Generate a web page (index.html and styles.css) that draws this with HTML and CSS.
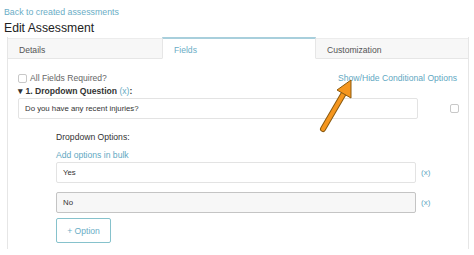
FILE: index.html
```html
<!DOCTYPE html>
<html>
<head>
    <meta charset="utf-8">
    <title>Edit Assessment</title>
    <link rel="stylesheet" href="styles.css">
</head>
<body>

    <a class="back" href="#">Back to created assessments</a>
    <h1 class="title">Edit Assessment</h1>

    <div class="panel">
        <div class="tabs">
            <div class="tab">Details</div>
            <div class="tab active">Fields</div>
            <div class="tab">Customization</div>
        </div>

        <div class="content">
            <div class="row-top">
                <label class="required"><span class="check"></span>All Fields Required?</label>
                <a class="link" href="#">Show/Hide Conditional Options</a>
            </div>

            <div class="question">&#9662; 1. Dropdown Question <span class="link">(x)</span>:</div>
            <div class="question-row">
                <div class="input wide">Do you have any recent injuries?</div>
                <span class="check right"></span>
            </div>

            <div class="options">
                <div class="label">Dropdown Options:</div>
                <a class="link" href="#">Add options in bulk</a>
                <div class="option-row">
                    <div class="input">Yes</div>
                    <span class="link remove">(x)</span>
                </div>
                <div class="option-row second">
                    <div class="input focus">No</div>
                    <span class="link remove">(x)</span>
                </div>
                <button type="button" class="add">+ Option</button>
            </div>
        </div>
    </div>

    <!-- annotation arrow -->
    <svg class="arrow" width="474" height="255" viewBox="0 0 474 255">
        <line x1="323" y1="129" x2="344" y2="93" stroke="#8a5a10" stroke-width="6" stroke-linecap="round"/>
        <line x1="323" y1="129" x2="344" y2="93" stroke="#f5961e" stroke-width="4" stroke-linecap="round"/>
        <polygon points="351,80 337,90 351,98" fill="#f5961e" stroke="#8a5a10" stroke-width="1" stroke-linejoin="round"/>
    </svg>

</body>
</html>
```

FILE: styles.css
```css
body {
    margin: 0;
    width: 474px;
    height: 255px;
    overflow: hidden;
    background: #fff;
    font-family: "Liberation Sans", Arial, sans-serif;
    color: #333;
    position: relative;
}

a {
    text-decoration: none;
}

.link {
    color: #5fa8c2;
}

.back {
    display: block;
    margin: 5px 0 0 4px;
    font-size: 8.8px;
    line-height: 14px;
    color: #6aadc6;
}

.title {
    margin: 0 0 0 4px;
    font-size: 12.2px;
    font-weight: normal;
    line-height: 18px;
    color: #222;
}

/* panel with tabs */
.panel {
    margin-left: 7px;
    width: 460px;
    height: 212px;
    border-left: 1px solid #e6e6e6;
    border-right: 1px solid #e6e6e6;
}

.tabs {
    display: flex;
    height: 22px;
}

.tab {
    width: 154px;
    height: 21px;
    margin-top: 1px;
    box-sizing: border-box;
    padding-left: 11px;
    font-size: 8.6px;
    line-height: 22px;
    color: #555;
    background: #f7f7f7;
    border-top: 1px solid #ececec;
    border-bottom: 1px solid #e6e6e6;
}

.tab:last-child {
    flex: 1;
}

.tab.active {
    height: 22px;
    margin-top: 0;
    background: #fff;
    color: #6aadc6;
    border-top: 2px solid #a8cfdc;
    border-left: 1px solid #e6e6e6;
    border-right: 1px solid #e6e6e6;
    border-bottom: 1px solid #fff;
}

.content {
    padding: 12px 0 0 10px;
    font-size: 8.6px;
}

.row-top {
    display: flex;
    justify-content: space-between;
    line-height: 14px;
    padding-right: 11px;
}

.required {
    display: flex;
    align-items: center;
    color: #666;
}

.check {
    display: inline-block;
    width: 7px;
    height: 7px;
    border: 1px solid #c8c8c8;
    border-radius: 2px;
    margin-right: 3px;
    background: #fff;
}

.question {
    font-weight: bold;
    line-height: 13px;
    color: #333;
}

.question .link {
    font-weight: normal;
}

.question-row {
    display: flex;
    align-items: center;
}

.input {
    width: 360px;
    height: 21px;
    box-sizing: border-box;
    border: 1px solid #e3e3e3;
    border-radius: 2px;
    padding-left: 6px;
    font-size: 7.8px;
    line-height: 19px;
    color: #333;
    background: #fff;
}

.input.wide {
    width: 400px;
}

.input.focus {
    background: #f7f7f7;
    border-color: #c4c4c4;
}

.check.right {
    margin-left: 32px;
}

.options {
    margin: 11px 0 0 38px;
}

.label {
    line-height: 14px;
}

.options > .link {
    display: block;
    margin-top: 4px;
    line-height: 14px;
}

.option-row {
    display: flex;
    align-items: center;
}

.option-row.second {
    margin-top: 9px;
}

.remove {
    margin-left: 5px;
    font-size: 8px;
}

.add {
    display: block;
    margin-top: 5px;
    width: 55px;
    height: 25px;
    border: 1px solid #86c2cc;
    border-radius: 2px;
    background: #fff;
    font-family: "Liberation Sans", Arial, sans-serif;
    font-size: 8.6px;
    color: #6aadc6;
    padding: 0;
}

.arrow {
    position: absolute;
    left: 0;
    top: 0;
}
```
